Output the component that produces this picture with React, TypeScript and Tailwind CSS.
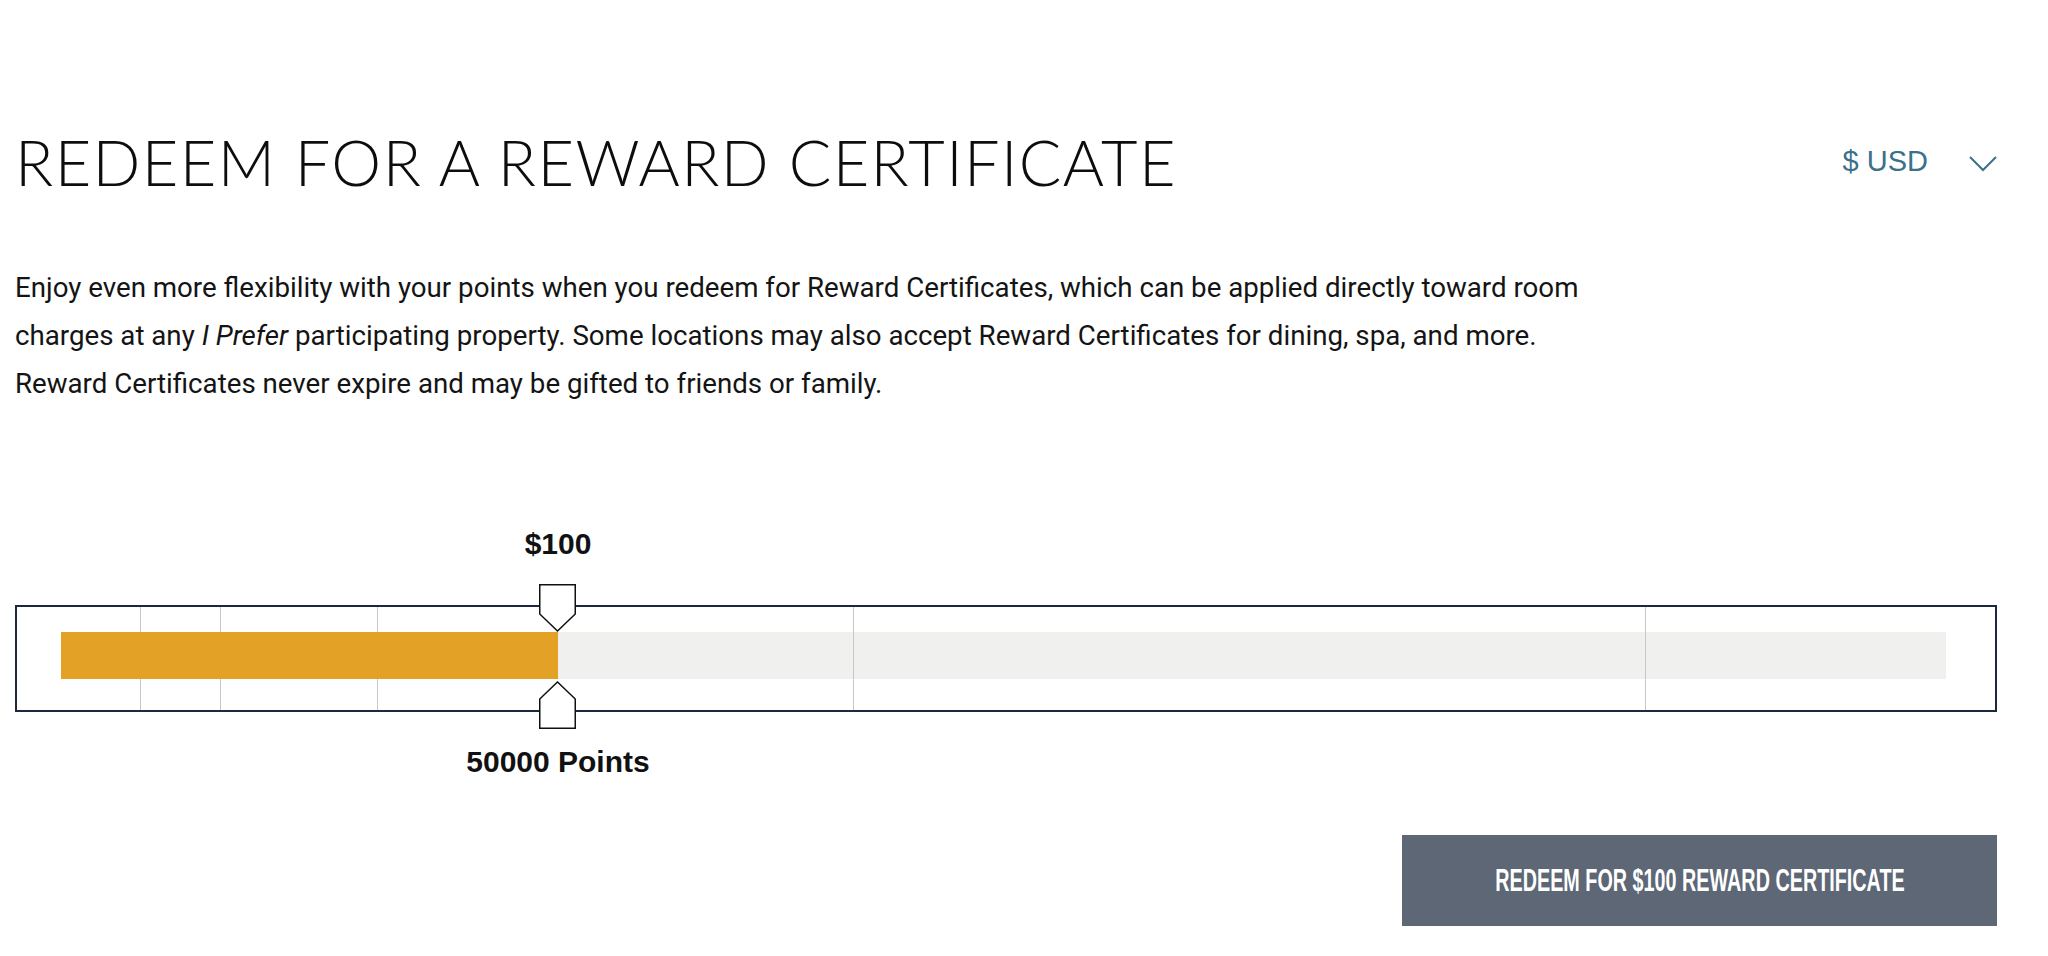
import React from 'react';

// tick marks along the scale, px from the box's left edge
const ticks = [123, 203, 360, 836, 1628];

function Thumb({ flip = false }: { flip?: boolean }) {
  return (
    <svg width="37" height="48" viewBox="0 0 37 48" className={flip ? 'rotate-180' : ''}>
      <polygon
        points="0.75,0.75 36.25,0.75 36.25,30 18.5,47 0.75,30"
        fill="#ffffff"
        stroke="#111111"
        strokeWidth="1.5"
      />
    </svg>
  );
}

function ValueLabel({ children }: { children: React.ReactNode }) {
  return (
    <div className="ml-[443px] w-[200px] text-center whitespace-nowrap text-[30px] leading-none font-bold text-[#111] font-['Liberation_Sans',Arial,sans-serif]">
      {children}
    </div>
  );
}

export default function App() {
  return (
    <div className="min-h-screen bg-white pl-[15px] pr-[51px] pb-10 text-[#151515]">
      <header className="pt-[130px] flex items-start justify-between">
        <h1
          className="text-[63px] leading-none font-light tracking-[1.4px] text-[#0d0d0d]"
          style={{ fontFamily: 'Lato, "Open Sans", sans-serif' }}
        >
          REDEEM FOR A REWARD CERTIFICATE
        </h1>
        <button className="mt-[17px] flex items-center gap-[41px] text-[29px] leading-none text-[#3b7189] font-['Liberation_Sans',Arial,sans-serif]">
          <span>$ USD</span>
          <svg width="28" height="16" viewBox="0 0 28 16" className="mt-[5px]">
            <polyline points="1,1 14,14 27,1" fill="none" stroke="#3b7189" strokeWidth="2" />
          </svg>
        </button>
      </header>

      <p className="mt-[71px] text-[27.7px] leading-[48px] text-[#141414] font-['Roboto','Liberation_Sans',sans-serif] whitespace-nowrap">
        Enjoy even more flexibility with your points when you redeem for Reward Certificates, which can be applied directly toward room
        <br />
        charges at any <em>I Prefer</em> participating property. Some locations may also accept Reward Certificates for dining, spa, and more.
        <br />
        Reward Certificates never expire and may be gifted to friends or family.
      </p>

      <section className="mt-[121px] flex flex-col">
        <ValueLabel>$100</ValueLabel>

        <div className="relative mt-[46px] h-[107px] border-2 border-[#1c2740]">
          <div className="relative mt-[25px] ml-[44px] mr-[49px] h-[47px] bg-[#f0f0ee]">
            <div className="absolute left-0 top-0 z-10 h-full w-[497px] bg-[#e3a226]" />
          </div>
          {ticks.map((x) => (
            <div key={x} className="absolute top-0 bottom-0 w-px bg-[#c8c8c8]" style={{ left: x }} />
          ))}
          <div className="absolute left-[522px] top-[-23px] z-20">
            <Thumb />
          </div>
          <div className="absolute left-[522px] top-[74px] z-20">
            <Thumb flip />
          </div>
        </div>

        <div className="mt-[35px]">
          <ValueLabel>50000 Points</ValueLabel>
        </div>
      </section>

      <div className="mt-[58px] flex justify-end">
        <button className="flex h-[91px] w-[595px] items-center justify-center overflow-hidden bg-[#5d6775] text-white">
          <span className="inline-block whitespace-nowrap text-[31px] leading-none font-bold uppercase font-['Liberation_Sans',Arial,sans-serif] scale-x-[0.638]">
            Redeem for $100 Reward Certificate
          </span>
        </button>
      </div>
    </div>
  );
}
